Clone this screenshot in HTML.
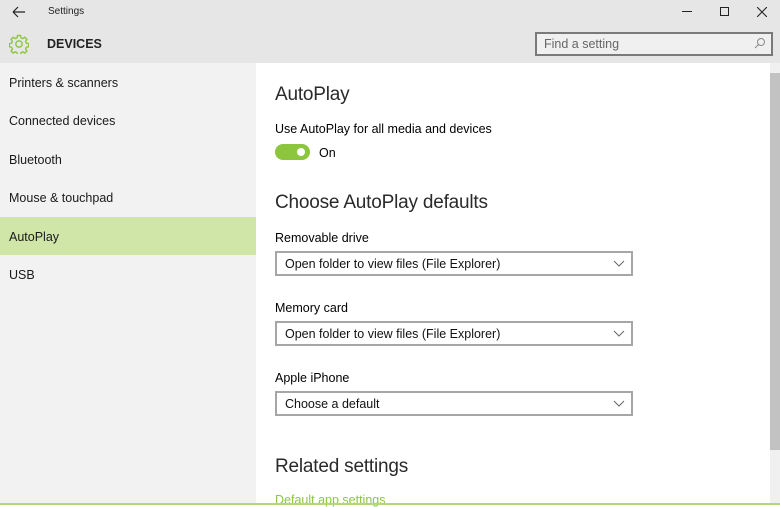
<!DOCTYPE html>
<html><head><style>
*{margin:0;padding:0;box-sizing:border-box}
body{width:780px;height:505px;overflow:hidden;font-family:"Liberation Sans",sans-serif;background:#fff;position:relative;color:#000}
.top{position:absolute;left:0;top:0;width:780px;height:63px;background:#e6e6e6}
.side{position:absolute;left:0;top:63px;width:256px;height:442px;background:#f2f2f2}
.item{position:absolute;left:9px;font-size:12.5px;color:#1a1a1a}
.sel{position:absolute;left:0;top:217px;width:256px;height:38px;background:#d0e5a8}
.t{position:absolute;white-space:nowrap}
.h{font-size:19px;color:#2a2a2a;letter-spacing:-0.2px}
.dd{position:absolute;left:275px;width:358px;height:25px;border:2px solid #a6a6a6;background:#fff;font-size:12.5px;padding:4px 0 0 8px;color:#111}
.dd svg{position:absolute;right:6px;top:7px}
</style></head><body>
<div class="top"></div>
<svg class="t" style="left:12px;top:6px" width="14" height="12"><path d="M1 6H13M1 6L6 1M1 6L6 11" stroke="#222" stroke-width="1.2" fill="none"/></svg>
<div class="t" style="left:48px;top:6px;font-size:10px;color:#222">Settings</div>
<div class="t" style="left:682px;top:11px;width:10px;height:1px;background:#222"></div>
<div class="t" style="left:720px;top:7px;width:9px;height:9px;border:1px solid #222"></div>
<svg class="t" style="left:757px;top:7px" width="10" height="10"><path d="M0 0L10 10M10 0L0 10" stroke="#222" stroke-width="1.1"/></svg>
<svg class="t" style="left:9px;top:34px" width="20" height="20" viewBox="0 0 20 20"><g fill="none" stroke="#8cc63f" stroke-width="1.4"><circle cx="10" cy="10" r="3.2"/><path d="M8.5 1.5h3l.5 2.3 1.8.8 2-1.3 2.1 2.1-1.3 2 .8 1.8 2.3.5v3l-2.3.5-.8 1.8 1.3 2-2.1 2.1-2-1.3-1.8.8-.5 2.3h-3l-.5-2.3-1.8-.8-2 1.3-2.1-2.1 1.3-2-.8-1.8-2.3-.5v-3l2.3-.5.8-1.8-1.3-2 2.1-2.1 2 1.3 1.8-.8z"/></g></svg>
<div class="t" style="left:47px;top:37px;font-size:12.5px;font-weight:bold;color:#222">DEVICES</div>
<div class="t" style="left:535px;top:32px;width:238px;height:24px;border:2px solid #7a7a7a;background:#f0f0f0;font-size:12.5px;color:#666;padding:3px 0 0 7px">Find a setting</div>
<svg class="t" style="left:754px;top:37px" width="12" height="12"><circle cx="7" cy="5" r="3.5" stroke="#888" fill="none"/><path d="M4.5 7.5L1 11" stroke="#888"/></svg>
<div class="side"></div>
<div class="sel"></div>
<div class="item" style="top:76px">Printers &amp; scanners</div>
<div class="item" style="top:114px">Connected devices</div>
<div class="item" style="top:153px">Bluetooth</div>
<div class="item" style="top:191px">Mouse &amp; touchpad</div>
<div class="item" style="top:230px">AutoPlay</div>
<div class="item" style="top:268px">USB</div>
<div class="t h" style="left:275px;top:84px">AutoPlay</div>
<div class="t" style="left:275px;top:122px;font-size:12.5px">Use AutoPlay for all media and devices</div>
<div class="t" style="left:275px;top:144px;width:35px;height:16px;border-radius:8px;background:#8cc63f"></div>
<div class="t" style="left:297px;top:148px;width:8px;height:8px;border-radius:4px;background:#fff"></div>
<div class="t" style="left:319px;top:146px;font-size:12.5px">On</div>
<div class="t h" style="left:275px;top:192px">Choose AutoPlay defaults</div>
<div class="t" style="left:275px;top:231px;font-size:12.5px">Removable drive</div>
<div class="dd" style="top:251px">Open folder to view files (File Explorer)<svg width="12" height="8"><path d="M1 1L6 6L11 1" stroke="#666" fill="none"/></svg></div>
<div class="t" style="left:275px;top:301px;font-size:12.5px">Memory card</div>
<div class="dd" style="top:321px">Open folder to view files (File Explorer)<svg width="12" height="8"><path d="M1 1L6 6L11 1" stroke="#666" fill="none"/></svg></div>
<div class="t" style="left:275px;top:371px;font-size:12.5px">Apple iPhone</div>
<div class="dd" style="top:391px">Choose a default<svg width="12" height="8"><path d="M1 1L6 6L11 1" stroke="#666" fill="none"/></svg></div>
<div class="t h" style="left:275px;top:456px">Related settings</div>
<div class="t" style="left:275px;top:493px;font-size:12.5px;color:#8cc63f">Default app settings</div>
<div class="t" style="left:770px;top:63px;width:10px;height:442px;background:#f0f0f0"></div>
<div class="t" style="left:770px;top:73px;width:10px;height:377px;background:#c2c2c2"></div>
<div class="t" style="left:0;top:503px;width:780px;height:2px;background:#b5d77a"></div>
</body></html>
